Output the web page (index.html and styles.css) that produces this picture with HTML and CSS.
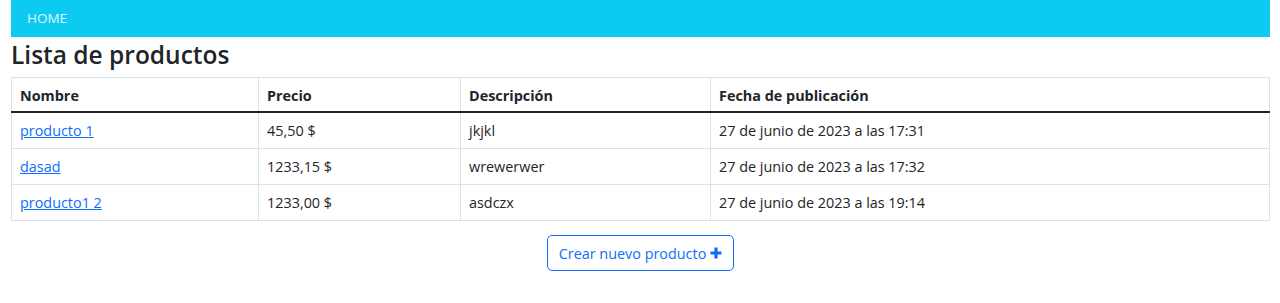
FILE: index.html
```html
<!DOCTYPE html>
<html lang="es">
<head>
    <meta charset="UTF-8">
    <meta name="viewport" content="width=device-width, initial-scale=1.0">
    <title>Productos</title>
    <link rel="stylesheet" href="styles.css">
</head>
<body>
    <div class="container">
        <nav class="navbar">
            <a href="#" class="nav-link">HOME</a>
        </nav>
        <h4 class="title">Lista de productos</h4>
        <table class="table">
            <thead>
                <tr>
                    <th class="col-name">Nombre</th>
                    <th class="col-price">Precio</th>
                    <th class="col-desc">Descripción</th>
                    <th>Fecha de publicación</th>
                </tr>
            </thead>
            <tbody>
                <tr>
                    <td><a href="#">producto 1</a></td>
                    <td>45,50 $</td>
                    <td>jkjkl</td>
                    <td>27 de junio de 2023 a las 17:31</td>
                </tr>
                <tr>
                    <td><a href="#">dasad</a></td>
                    <td>1233,15 $</td>
                    <td>wrewerwer</td>
                    <td>27 de junio de 2023 a las 17:32</td>
                </tr>
                <tr>
                    <td><a href="#">producto1 2</a></td>
                    <td>1233,00 $</td>
                    <td>asdczx</td>
                    <td>27 de junio de 2023 a las 19:14</td>
                </tr>
            </tbody>
        </table>
        <div class="actions">
            <a href="#" class="btn-new">Crear nuevo producto
                <svg class="plus" viewBox="0 0 12 12" width="12" height="12"><path d="M4.4 0.5h3.2v3.9h3.9v3.2H7.6v3.9H4.4V7.6H0.5V4.4h3.9z"/></svg>
            </a>
        </div>
    </div>
</body>
</html>
```

FILE: styles.css
```css
* {
    margin: 0;
    padding: 0;
    box-sizing: border-box;
}

body {
    font-family: "Open Sans", "Noto Sans", sans-serif;
    font-size: 14.4px;
    line-height: 1.5;
    color: #212529;
    background: #fff;
}

.container {
    padding: 0 11px;
    width: 1281px;
}

.navbar {
    display: flex;
    align-items: center;
    height: 37px;
    padding: 0 16px;
    background: #0dcaf0;
}

.nav-link {
    color: rgba(255, 255, 255, 0.9);
    text-decoration: none;
    font-size: 13.5px;
}

.title {
    font-size: 24.5px;
    font-weight: 600;
    line-height: 1.2;
    padding: 3px 0 8px;
}

.table {
    width: 1259px;
    border-collapse: collapse;
    table-layout: fixed;
}

.table th,
.table td {
    padding: 7px 8px;
    line-height: 21px;
    border: 1px solid #dee2e6;
    text-align: left;
    vertical-align: top;
}

.table th {
    font-weight: 700;
    border-bottom: 2px solid #212529;
    padding-bottom: 5px;
}

.col-name {
    width: 247px;
}

.col-price {
    width: 202px;
}

.col-desc {
    width: 250px;
}

.table a {
    color: #0d6efd;
}

.actions {
    display: flex;
    justify-content: center;
    padding-top: 14px;
}

.btn-new {
    display: inline-flex;
    align-items: center;
    gap: 4px;
    height: 36px;
    padding: 0 11px;
    border: 1px solid #0d6efd;
    border-radius: 5px;
    color: #0d6efd;
    text-decoration: none;
    font-size: 14.4px;
}

.plus {
    fill: #0d6efd;
}
```
